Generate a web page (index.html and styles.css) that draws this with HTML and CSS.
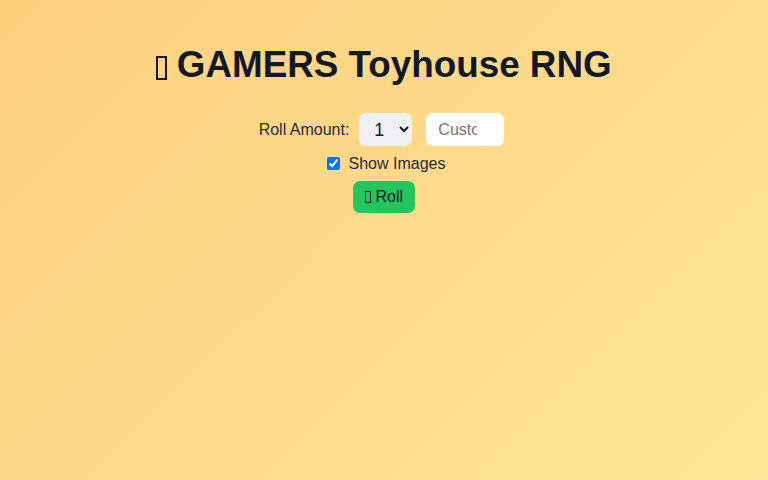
FILE: index.html
```html
<!DOCTYPE html>
<html>
<head>
    <title>GAMERS Toyhouse RNG</title>
    <meta charset="UTF-8">
    <link rel="stylesheet" href="styles.css">
</head>
<body>
    <div class="app">
        <h1><span class="glyph"></span> GAMERS Toyhouse RNG</h1>

        <div class="controls">
            <label for="amount">Roll Amount:</label>
            <select id="amount">
                <option>1</option>
                <option>3</option>
                <option>5</option>
                <option>10</option>
            </select>
            <input type="number" id="custom" placeholder="Custom">
        </div>

        <div class="option">
            <input type="checkbox" id="showImages" checked>
            <label for="showImages">Show Images</label>
        </div>

        <button class="roll-btn"><span class="glyph"></span> Roll</button>

        <div id="results"></div>
    </div>
</body>
</html>
```

FILE: styles.css
```css
html, body {
    height: 100%;
}
body {
    font-family: 'Liberation Sans', Arial, sans-serif;
    margin: 0;
    color: #1f2937;
    background: linear-gradient(135deg, #fdd07e, #ffe597);
}
.app {
    display: flex;
    flex-direction: column;
    align-items: center;
    padding-top: 44px;
}
h1 {
    color: #111827;
    font-size: 36.8px;
    margin: 0 0 27px;
}
/* missing-emoji box */
.glyph {
    display: inline-block;
    box-sizing: border-box;
    width: 0.28em;
    height: 0.64em;
    border: 0.06em solid currentColor;
    vertical-align: -0.08em;
}
.controls {
    display: flex;
    align-items: center;
    gap: 10px;
    font-size: 16px;
}
.controls select {
    font-family: inherit;
    font-size: 18px;
    color: #111827;
    background-color: #eef0f3;
    border: none;
    border-radius: 7px;
    height: 33px;
    padding: 0 1px 0 11px;
    margin-right: 4px;
}
.controls input {
    font-family: inherit;
    font-size: 16px;
    border: none;
    border-radius: 7px;
    height: 33px;
    width: 78px;
    box-sizing: border-box;
    padding: 0 12px;
    margin-right: 5px;
    background: #fff;
}
.option {
    display: flex;
    align-items: center;
    gap: 9px;
    margin-top: 9px;
    font-size: 16px;
}
.option input {
    margin: 0 0 2px 4px;
    width: 13px;
    height: 13px;
}
.roll-btn {
    margin-top: 8px;
    font-family: inherit;
    font-size: 16px;
    color: #111827;
    background-color: #22c55e;
    border: none;
    border-radius: 7px;
    padding: 7px 12px;
}
.roll-btn .glyph {
    width: 6px;
    height: 12px;
    border-width: 1px;
    vertical-align: -1px;
}
```
